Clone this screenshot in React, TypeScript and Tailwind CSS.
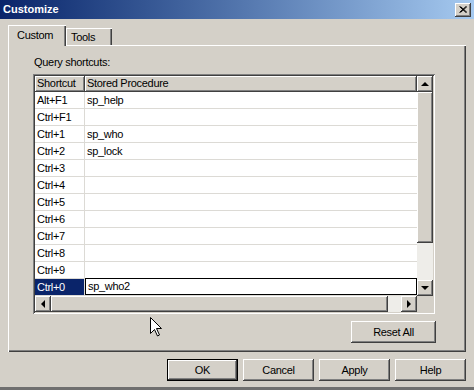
import React from 'react';

const rows: { key: string; proc: string }[] = [
  { key: 'Alt+F1', proc: 'sp_help' },
  { key: 'Ctrl+F1', proc: '' },
  { key: 'Ctrl+1', proc: 'sp_who' },
  { key: 'Ctrl+2', proc: 'sp_lock' },
  { key: 'Ctrl+3', proc: '' },
  { key: 'Ctrl+4', proc: '' },
  { key: 'Ctrl+5', proc: '' },
  { key: 'Ctrl+6', proc: '' },
  { key: 'Ctrl+7', proc: '' },
  { key: 'Ctrl+8', proc: '' },
  { key: 'Ctrl+9', proc: '' },
  { key: 'Ctrl+0', proc: 'sp_who2' },
];

const raised =
  'bg-[#d4d0c8] shadow-[inset_-1px_-1px_#404040,inset_1px_1px_#ffffff,inset_-2px_-2px_#808080]';

function Arrow({ dir }: { dir: 'up' | 'down' | 'left' | 'right' }) {
  const pts = {
    up: '4,1 0,5 8,5',
    down: '0,1 8,1 4,5',
    left: '5,0 5,8 1,4',
    right: '1,0 1,8 5,4',
  }[dir];
  const vert = dir === 'up' || dir === 'down';
  return (
    <svg width={vert ? 8 : 6} height={vert ? 6 : 8} viewBox={vert ? '0 0 8 6' : '0 0 6 8'}>
      <polygon points={pts} fill="#000" />
    </svg>
  );
}

function ScrollBtn({ dir }: { dir: 'up' | 'down' | 'left' | 'right' }) {
  return (
    <div className={`w-[16px] h-[16px] shrink-0 flex items-center justify-center ${raised}`}>
      <Arrow dir={dir} />
    </div>
  );
}

function Button({ label, isDefault, w = 'w-[71px]' }: { label: string; isDefault?: boolean; w?: string }) {
  return (
    <div
      className={`${w} h-[22px] flex items-center justify-center text-[11px] text-black ${
        isDefault
          ? 'bg-[#d4d0c8] shadow-[inset_0_0_0_1px_#000,inset_-2px_-2px_#404040,inset_2px_2px_#ffffff,inset_-3px_-3px_#808080]'
          : raised
      }`}
    >
      {label}
    </div>
  );
}

export default function App() {
  return (
    <div className="relative w-[474px] h-[390px] overflow-hidden bg-[#d4d0c8] border-b-[3px] border-[#6f6f6f] font-['Liberation_Sans',Arial,sans-serif] tracking-[-0.3px] text-black flex flex-col">
      {/* title bar */}
      <div className="h-[19px] shrink-0 flex items-center justify-between pl-[3px] pr-[3px] bg-gradient-to-r from-[#0a246a] to-[#a6caf0]">
        <span className="text-white text-[11px] font-bold tracking-normal">Customize</span>
        <div className={`w-[16px] h-[14px] flex items-center justify-center ${raised}`}>
          <svg width="8" height="7" viewBox="0 0 8 7">
            <path d="M0.5 0.5 L7 6.5 M1.5 0.5 L8 6.5 M7 0.5 L0.5 6.5 M8 0.5 L1.5 6.5" stroke="#000" strokeWidth="1" />
          </svg>
        </div>
      </div>

      {/* tabs */}
      <div className="h-[20px] mt-[6px] flex items-end pl-[8px] text-[11px] leading-[13px]">
        <div className="relative z-10 w-[58px] h-[21px] -mb-[1px] pt-[4px] pl-[9px] bg-[#d4d0c8] shadow-[inset_1px_1px_#ffffff,inset_-1px_0_#404040,inset_-2px_0_#808080]">
          Custom
        </div>
        <div className="w-[46px] h-[17px] pt-[3px] pl-[5px] bg-[#d4d0c8] shadow-[inset_1px_1px_#ffffff,inset_-1px_0_#404040,inset_-2px_0_#808080]">
          Tools
        </div>
      </div>

      {/* tab panel */}
      <div className="mx-[8px] h-[307px] shrink-0 flex flex-col pl-[25px] pr-[30px] pt-[11px] shadow-[inset_1px_1px_#ffffff,inset_-1px_-1px_#404040,inset_-2px_-2px_#808080]">
        <div className="text-[11px] leading-[13px] pl-[1px]">Query shortcuts:</div>

        <div className="mt-[5px] w-[402px] h-[240px] p-[2px] shadow-[inset_1px_1px_#808080,inset_-1px_-1px_#ffffff,inset_2px_2px_#404040,inset_-2px_-2px_#d4d0c8]">
          <div className="grid grid-cols-[1fr_16px] grid-rows-[1fr_16px] w-full h-full">
            {/* list */}
            <div className="bg-white overflow-hidden text-[11px]">
              <div className="flex h-[16px] leading-[15px]">
                <div className={`w-[50px] pl-[2px] ${raised}`}>Shortcut</div>
                <div className={`flex-1 pl-[2px] ${raised}`}>Stored Procedure</div>
              </div>
              {rows.map((r, i) => {
                const sel = i === rows.length - 1;
                return (
                  <div key={r.key} className="flex h-[17px] leading-[16px] border-b border-[#dcdad5]">
                    <div
                      className={`w-[50px] pl-[2px] border-r border-[#dcdad5] ${
                        sel ? 'bg-[#0a246a] text-white' : ''
                      }`}
                    >
                      {r.key}
                    </div>
                    <div className={`flex-1 pl-[2px] ${sel ? 'border border-black -mt-[1px] h-[17px] leading-[15px]' : ''}`}>
                      {r.proc}
                    </div>
                  </div>
                );
              })}
            </div>

            {/* vertical scrollbar */}
            <div className="flex flex-col bg-[#eeede9]">
              <ScrollBtn dir="up" />
              <div className={`h-[151px] shrink-0 ${raised}`} />
              <div className="flex-1" />
              <ScrollBtn dir="down" />
            </div>

            {/* horizontal scrollbar */}
            <div className="flex bg-[#eeede9]">
              <ScrollBtn dir="left" />
              <div className={`w-[337px] shrink-0 ${raised}`} />
              <div className="flex-1" />
              <ScrollBtn dir="right" />
            </div>

            <div className="bg-[#d4d0c8]" />
          </div>
        </div>

        <div className="mt-[7px] flex justify-end">
          <Button label="Reset All" w="w-[85px]" />
        </div>
      </div>

      {/* dialog buttons */}
      <div className="mt-[7px] flex justify-end gap-[5px] pr-[8px]">
        <Button label="OK" isDefault />
        <Button label="Cancel" />
        <Button label="Apply" />
        <Button label="Help" />
      </div>

      {/* mouse pointer */}
      <svg className="absolute left-[150px] top-[317px]" width="12" height="20" viewBox="0 0 12 20">
        <path
          d="M0.5 0.5 L0.5 16.5 L4.5 12.5 L7.5 19 L9.5 18 L6.5 11.5 L11.5 11.5 Z"
          fill="#fff"
          stroke="#000"
          strokeWidth="1"
        />
      </svg>
    </div>
  );
}
